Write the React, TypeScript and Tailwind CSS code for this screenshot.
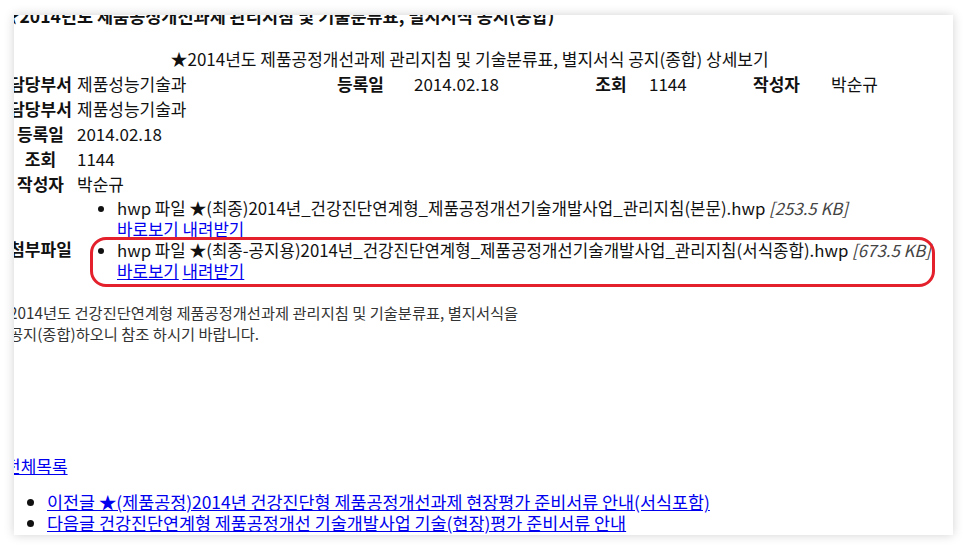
import React from 'react';

// One attachment row in the file list
interface Attachment {
  name: string;
  size: string;
  marked?: boolean;
}

const attachments: Attachment[] = [
  {
    name: '★(최종)2014년_건강진단연계형_제품공정개선기술개발사업_관리지침(본문).hwp',
    size: '[253.5 KB]',
  },
  {
    name: '★(최종-공지용)2014년_건강진단연계형_제품공정개선기술개발사업_관리지침(서식종합).hwp',
    size: '[673.5 KB]',
    marked: true,
  },
];

const subRows = [
  { label: '담당부서', value: '제품성능기술과' },
  { label: '등록일', value: '2014.02.18' },
  { label: '조회', value: '1144' },
  { label: '작성자', value: '박순규' },
];

const Label: React.FC<{ children: React.ReactNode; className?: string }> = ({ children, className }) => (
  <div className={`shrink-0 whitespace-nowrap text-center font-bold ${className ?? ''}`}>{children}</div>
);

const App: React.FC = () => {
  return (
    <div className="min-h-[550px] bg-white pl-[14px] pt-[15px] font-['Noto_Sans_CJK_KR',sans-serif]">
      <div className="h-[520px] w-[939px] overflow-hidden bg-white shadow-[0_0_10px_rgba(0,0,0,0.18)]">
        <div className="-ml-[14px] -mt-[11px] w-[939px] text-[17px] text-[#111]">
          <h2 className="whitespace-nowrap pl-[2px] text-[17.5px] font-bold leading-[24px]">
            ★2014년도 제품공정개선과제 관리지침 및 기술분류표, 별지서식 공지(종합)
          </h2>

          <div className="mt-[19px] whitespace-nowrap text-center leading-[24px]">
            ★2014년도 제품공정개선과제 관리지침 및 기술분류표, 별지서식 공지(종합) 상세보기
          </div>

          {/* wide row */}
          <div className="flex h-[25px] items-center leading-[25px]">
            <Label className="w-[77px] pl-[4px]">담당부서</Label>
            <div className="w-[230px] shrink-0">제품성능기술과</div>
            <Label className="w-[107px]">등록일</Label>
            <div className="w-[159px] shrink-0">2014.02.18</div>
            <Label className="w-[76px]">조회</Label>
            <div className="w-[73px] shrink-0">1144</div>
            <Label className="w-[109px]">작성자</Label>
            <div>박순규</div>
          </div>

          {subRows.map((row) => (
            <div key={row.label} className="flex h-[25px] items-center leading-[25px]">
              <Label className="w-[77px] pl-[4px]">{row.label}</Label>
              <div>{row.value}</div>
            </div>
          ))}

          <div className="flex items-center">
            <Label className="w-[77px] pl-[4px] leading-[25px]">첨부파일</Label>
            <ul className="list-disc pb-[19px] pl-[40px] pt-[2px] text-[16.8px] leading-[21px]">
              {attachments.map((file) => (
                <li key={file.name} className="relative">
                  <div className="whitespace-nowrap">
                    hwp 파일 {file.name} <em className="text-[#444]">{file.size}</em>
                  </div>
                  <div>
                    <a href="#" className="text-[#0000ee] underline">바로보기</a>{' '}
                    <a href="#" className="text-[#0000ee] underline">내려받기</a>
                  </div>
                  {file.marked && (
                    <span className="pointer-events-none absolute -bottom-[5px] -left-[27px] -right-[4px] -top-[3px] rounded-[16px] border-[3px] border-[#e3202b]" />
                  )}
                </li>
              ))}
            </ul>
          </div>

          <p className="mt-[1px] whitespace-nowrap pl-[9px] text-[15.3px] leading-[21px] text-[#333]">
            2014년도 건강진단연계형 제품공정개선과제 관리지침 및 기술분류표, 별지서식을
            <br />
            공지(종합)하오니 참조 하시기 바랍니다.
          </p>

          <a href="#" className="mt-[111px] block w-fit pl-[5px] leading-[21px] text-[#0000ee] underline">
            전체목록
          </a>

          <ul className="mt-[15px] list-disc whitespace-nowrap pl-[47px] text-[17.4px] leading-[21px]">
            <li>
              <a href="#" className="text-[#0000ee] underline">
                이전글 ★(제품공정)2014년 건강진단형 제품공정개선과제 현장평가 준비서류 안내(서식포함)
              </a>
            </li>
            <li>
              <a href="#" className="text-[#0000ee] underline">
                다음글 건강진단연계형 제품공정개선 기술개발사업 기술(현장)평가 준비서류 안내
              </a>
            </li>
          </ul>
        </div>
      </div>
    </div>
  );
};

export default App;
